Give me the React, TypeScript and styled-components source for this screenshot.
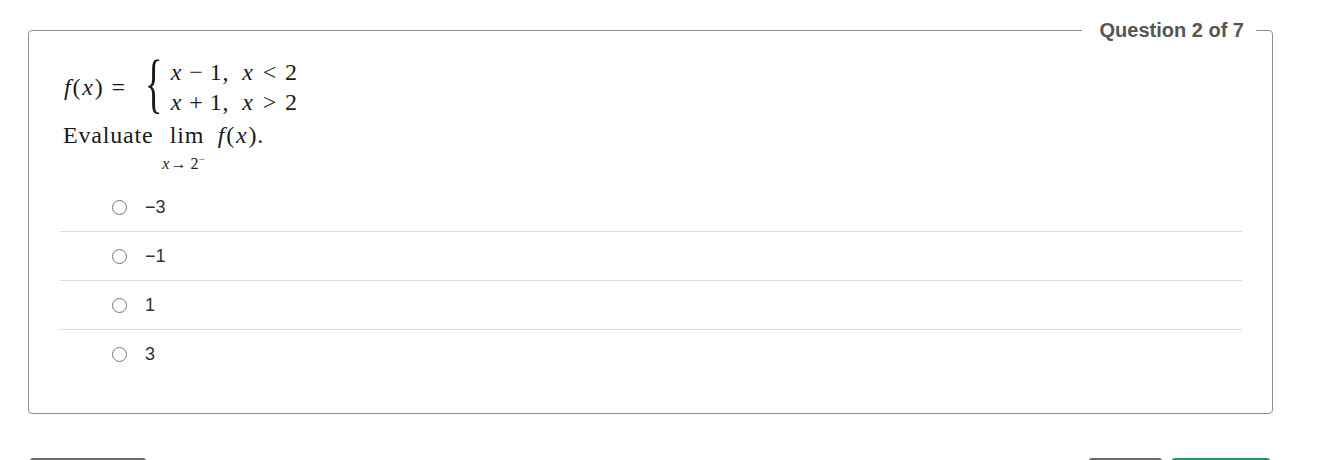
import React from 'react';
import styled, { createGlobalStyle } from 'styled-components';

const GlobalStyle = createGlobalStyle`
  html, body {
    margin: 0;
    padding: 0;
    background: #ffffff;
    font-family: "Liberation Sans", Arial, sans-serif;
    color: #333333;
  }
`;

const Page = styled.div`
  padding: 20px 58px 0 28px;
`;

const Fieldset = styled.fieldset`
  margin: 0;
  padding: 14px 30px 35px 30px;
  border: 1px solid #8f8f8f;
  border-radius: 4px;
  min-width: 0;
`;

const Legend = styled.legend`
  margin-left: auto;
  margin-right: -14px;
  padding: 0 12px 0 18px;
  font-family: "Liberation Sans", Arial, sans-serif;
  font-weight: bold;
  font-size: 20px;
  line-height: 21px;
  color: #555555;
`;

const Problem = styled.div`
  padding-left: 4px;
  font-family: "Liberation Serif", "Times New Roman", serif;
  font-size: 24px;
  letter-spacing: 0.8px;
  color: #1a1a1a;
`;

const Piecewise = styled.div`
  display: flex;
  align-items: center;
  height: 64px;
`;

const Var = styled.i`
  font-style: italic;
  margin: 0 1px;
`;

const Op = styled.span<{ $gap?: number }>`
  margin: 0 ${(p) => p.$gap ?? 6}px;
`;

const Brace = styled.span`
  display: inline-block;
  font-size: 66px;
  line-height: 60px;
  font-weight: 300;
  transform: scaleX(0.55);
  margin: 0 0 8px 6px;
  width: 22px;
  text-align: center;
`;

const Cases = styled.div`
  display: grid;
  grid-template-columns: auto auto;
  column-gap: 12px;
  row-gap: 4px;
  margin-left: 8px;
  line-height: 26px;
`;

const EvalLine = styled.div`
  display: flex;
  align-items: flex-start;
  margin-top: 3px;
  height: 61px;
  line-height: 26px;
`;

const Lim = styled.span`
  display: inline-flex;
  flex-direction: column;
  align-items: center;
  margin: 0 12px 0 16px;
`;

const LimSub = styled.span`
  font-size: 16px;
  line-height: 16px;
  letter-spacing: 0;
  margin: 3px 0 0 -8px;
`;

const Sup = styled.sup`
  font-size: 11px;
  color: #555555;
`;

const OptionList = styled.div`
  display: flex;
  flex-direction: column;
`;

const Option = styled.label<{ $last?: boolean }>`
  display: flex;
  align-items: center;
  height: 48px;
  padding-left: 53px;
  border-bottom: ${(p) => (p.$last ? 'none' : '1px solid #dddddd')};
  font-family: "Liberation Sans", Arial, sans-serif;
  font-size: 18px;
  color: #333333;
  cursor: pointer;
`;

const Radio = styled.span`
  width: 13px;
  height: 13px;
  border: 1.5px solid #767676;
  border-radius: 50%;
  margin-right: 18px;
  flex-shrink: 0;
`;

const ButtonBar = styled.div`
  display: flex;
  align-items: flex-start;
  gap: 10px;
  margin-top: 44px;
  padding: 0 3px 0 2px;
`;

const Spacer = styled.div`
  flex: 1;
`;

const Button = styled.button<{ $primary?: boolean; $width: number }>`
  width: ${(p) => p.$width}px;
  height: 40px;
  border: 2px solid ${(p) => (p.$primary ? '#1a9c6d' : '#6b6b6b')};
  border-radius: 3px;
  background: ${(p) => (p.$primary ? '#1a9c6d' : '#ffffff')};
  color: ${(p) => (p.$primary ? '#ffffff' : '#333333')};
  font-family: "Liberation Sans", Arial, sans-serif;
  font-size: 16px;
  font-weight: bold;
  cursor: pointer;
`;

const options = ['−3', '−1', '1', '3'];

const App: React.FC = () => {
  return (
    <Page>
      <GlobalStyle />
      <Fieldset>
        <Legend>Question 2 of 7</Legend>
        <Problem>
          <Piecewise>
            <span>
              <Var>f</Var>(<Var>x</Var>)
            </span>
            <Op $gap={8}>=</Op>
            <Brace>{'{'}</Brace>
            <Cases>
              <span>
                <Var>x</Var>
                <Op $gap={6}>−</Op>1,
              </span>
              <span>
                <Var>x</Var>
                <Op $gap={8}>&lt;</Op>2
              </span>
              <span>
                <Var>x</Var>
                <Op $gap={6}>+</Op>1,
              </span>
              <span>
                <Var>x</Var>
                <Op $gap={8}>&gt;</Op>2
              </span>
            </Cases>
          </Piecewise>
          <EvalLine>
            <span>Evaluate</span>
            <Lim>
              <span>lim</span>
              <LimSub>
                <Var>x</Var>→ 2<Sup>−</Sup>
              </LimSub>
            </Lim>
            <span>
              <Var>f</Var>(<Var>x</Var>).
            </span>
          </EvalLine>
        </Problem>
        <OptionList>
          {options.map((o, i) => (
            <Option key={o} $last={i === options.length - 1}>
              <Radio />
              {o}
            </Option>
          ))}
        </OptionList>
      </Fieldset>
      <ButtonBar>
        <Button $width={116}>Previous</Button>
        <Spacer />
        <Button $width={73}>Skip</Button>
        <Button $width={98} $primary>
          Next
        </Button>
      </ButtonBar>
    </Page>
  );
};

export default App;
